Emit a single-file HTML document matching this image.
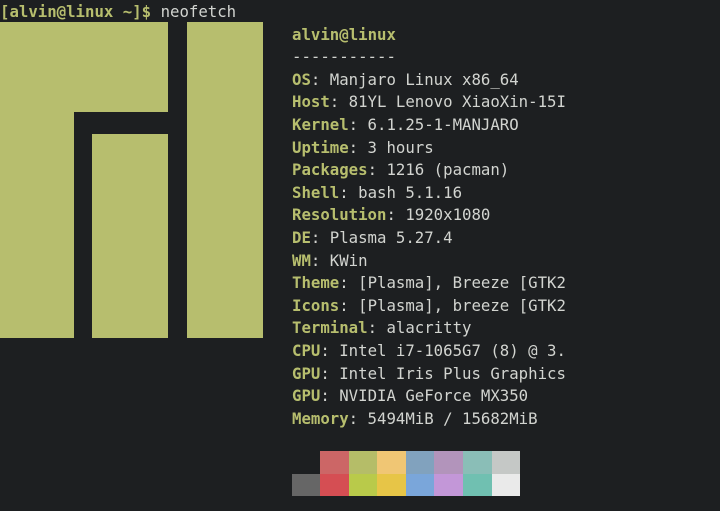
<!DOCTYPE html>
<html><head><meta charset="utf-8"><style>
html,body{margin:0;padding:0;background:#1d1f21;width:720px;height:511px;overflow:hidden}
.t{position:absolute;left:0;top:1px;font-family:"DejaVu Sans Mono","Liberation Mono",monospace;font-size:15.7px;line-height:22.6px;color:#d2d4d0;white-space:pre}
.g{color:#b7be6e;font-weight:bold}
.info{position:absolute;left:292px;top:23.6px;font-family:"DejaVu Sans Mono","Liberation Mono",monospace;font-size:15.7px;line-height:22.6px;color:#d2d4d0;white-space:pre}
.b{position:absolute;background:#b7be6e}
.s{position:absolute;width:28.6px;height:22.6px}
</style></head><body>
<div class="t"><span class="g">[alvin@linux ~]$</span> neofetch</div>
<div class="b" style="left:0;top:22px;width:168px;height:90px"></div>
<div class="b" style="left:0;top:22px;width:74px;height:316px"></div>
<div class="b" style="left:92px;top:134px;width:76px;height:204px"></div>
<div class="b" style="left:187px;top:22px;width:76px;height:316px"></div>
<div class="info"><span class="g">alvin</span><span class="g">@</span><span class="g">linux</span>
-----------
<span class="g">OS</span>: Manjaro Linux x86_64
<span class="g">Host</span>: 81YL Lenovo XiaoXin-15I
<span class="g">Kernel</span>: 6.1.25-1-MANJARO
<span class="g">Uptime</span>: 3 hours
<span class="g">Packages</span>: 1216 (pacman)
<span class="g">Shell</span>: bash 5.1.16
<span class="g">Resolution</span>: 1920x1080
<span class="g">DE</span>: Plasma 5.27.4
<span class="g">WM</span>: KWin
<span class="g">Theme</span>: [Plasma], Breeze [GTK2
<span class="g">Icons</span>: [Plasma], breeze [GTK2
<span class="g">Terminal</span>: alacritty
<span class="g">CPU</span>: Intel i7-1065G7 (8) @ 3.
<span class="g">GPU</span>: Intel Iris Plus Graphics
<span class="g">GPU</span>: NVIDIA GeForce MX350
<span class="g">Memory</span>: 5494MiB / 15682MiB</div>
<div class="s" style="left:320px;top:451px;background:#cc6666"></div>
<div class="s" style="left:348.6px;top:451px;background:#b5bd68"></div>
<div class="s" style="left:377.2px;top:451px;background:#f0c674"></div>
<div class="s" style="left:405.8px;top:451px;background:#81a2be"></div>
<div class="s" style="left:434.4px;top:451px;background:#b294bb"></div>
<div class="s" style="left:463px;top:451px;background:#8abeb7"></div>
<div class="s" style="left:491.6px;top:451px;background:#c5c8c6"></div>
<div class="s" style="left:292px;top:473.6px;background:#666666"></div>
<div class="s" style="left:320px;top:473.6px;background:#d54e53"></div>
<div class="s" style="left:348.6px;top:473.6px;background:#b9ca4a"></div>
<div class="s" style="left:377.2px;top:473.6px;background:#e7c547"></div>
<div class="s" style="left:405.8px;top:473.6px;background:#7aa6da"></div>
<div class="s" style="left:434.4px;top:473.6px;background:#c397d8"></div>
<div class="s" style="left:463px;top:473.6px;background:#70c0b1"></div>
<div class="s" style="left:491.6px;top:473.6px;background:#eaeaea"></div>
</body></html>
